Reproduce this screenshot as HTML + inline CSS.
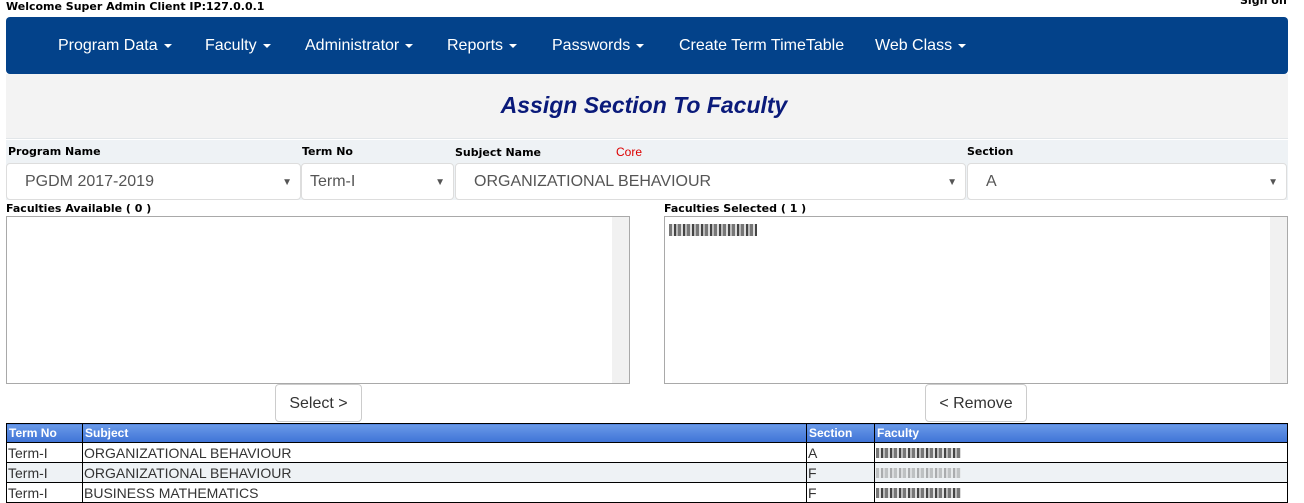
<!DOCTYPE html>
<html><head><meta charset="utf-8"><style>
*{box-sizing:border-box;margin:0;padding:0}
body{width:1304px;height:499px;overflow:hidden;background:#fff;font-family:"Liberation Sans",sans-serif;position:relative}
.a{position:absolute}
.lbl{font-family:"DejaVu Sans",sans-serif;font-weight:bold;font-size:11px;color:#000}
.nav{left:6px;top:17px;width:1282px;height:57px;background:#03428a;border-radius:4px}
.nav span{position:absolute;top:20px;color:#fff;font-size:16px;font-family:"Liberation Sans",sans-serif}
.car{display:inline-block;border-left:4px solid transparent;border-right:4px solid transparent;border-top:4px solid #fff;vertical-align:middle;margin-left:6px}
.sel{top:163px;height:37px;background:#fff;border:1px solid #ddd;border-radius:4px;font-size:16px;color:#555;padding:9px 0 0 18px}
.sel i{position:absolute;right:8px;top:13px;font-style:normal;font-size:10px;color:#555}
.lb{top:216px;height:168px;border:1px solid #a9a9a9;background:#fff}
.sb{position:absolute;right:0;top:0;width:17px;height:100%;background:#f1f1f1}
.btn{top:384px;height:38px;border:1px solid #ccc;border-radius:4px;background:#fff;font-size:16px;color:#333;text-align:center;padding-top:10px}
table{position:absolute;left:6px;top:423px;width:1282px;border-collapse:collapse;font-size:14px}
th{background:linear-gradient(#6a9ae8,#3f73d6);color:#fff;text-align:left;font-size:12px;font-family:"Liberation Sans",sans-serif;height:19px;border:1px solid #000;padding:0 2px}
td{height:20px;border:1px solid #000;padding:0 1px;color:#333}
tr.alt td{background:#eef2f5}
.blur{display:inline-block;width:85px;height:10px;background:repeating-linear-gradient(90deg,#777 0 3px,#ddd 3px 5px,#444 5px 7px,#bbb 7px 9px)}
</style></head><body>
<div class="a lbl" style="left:6px;top:0;">Welcome Super Admin Client IP:127.0.0.1</div>
<div class="a lbl" style="left:1240px;top:-6px;">Sign off</div>
<div class="a nav">
<span style="left:52px">Program Data<b class="car"></b></span>
<span style="left:199px">Faculty<b class="car"></b></span>
<span style="left:299px">Administrator<b class="car"></b></span>
<span style="left:441px">Reports<b class="car"></b></span>
<span style="left:546px">Passwords<b class="car"></b></span>
<span style="left:673px">Create Term TimeTable</span>
<span style="left:869px">Web Class<b class="car"></b></span>
</div>
<div class="a" style="left:6px;top:74px;width:1282px;height:65px;background:#f3f3f3;border-bottom:1px solid #e2e6e9"></div>
<div class="a" style="left:0;top:92px;width:1288px;text-align:center;font-size:23px;font-weight:bold;font-style:italic;color:#0a1a7a">Assign Section To Faculty</div>
<div class="a" style="left:6px;top:140px;width:1282px;height:60px;background:#eef2f5"></div>
<div class="a lbl" style="left:8px;top:145px">Program Name</div>
<div class="a lbl" style="left:302px;top:145px">Term No</div>
<div class="a lbl" style="left:455px;top:146px">Subject Name</div>
<div class="a" style="left:616px;top:145px;font-size:12px;color:#d00">Core</div>
<div class="a lbl" style="left:967px;top:145px">Section</div>
<div class="a sel" style="left:6px;width:295px">PGDM 2017-2019<i>▼</i></div>
<div class="a sel" style="left:301px;width:153px;padding-left:8px">Term-I<i>▼</i></div>
<div class="a sel" style="left:455px;width:511px">ORGANIZATIONAL BEHAVIOUR<i>▼</i></div>
<div class="a sel" style="left:967px;width:320px">A<i>▼</i></div>
<div class="a lbl" style="left:6px;top:202px">Faculties Available ( 0 )</div>
<div class="a lbl" style="left:664px;top:202px">Faculties Selected ( 1 )</div>
<div class="a lb" style="left:6px;width:624px"><div class="sb"></div></div>
<div class="a lb" style="left:664px;width:624px"><div class="sb"></div><span class="blur" style="position:absolute;left:4px;top:7px;width:88px;height:12px"></span></div>
<div class="a btn" style="left:275px;width:87px">Select &gt;</div>
<div class="a btn" style="left:925px;width:102px">&lt; Remove</div>
<table>
<tr><th style="width:76px">Term No</th><th style="width:724px">Subject</th><th style="width:68px">Section</th><th>Faculty</th></tr>
<tr><td>Term-I</td><td>ORGANIZATIONAL BEHAVIOUR</td><td>A</td><td><span class="blur"></span></td></tr>
<tr class="alt"><td>Term-I</td><td>ORGANIZATIONAL BEHAVIOUR</td><td>F</td><td><span class="blur" style="opacity:.4"></span></td></tr>
<tr><td>Term-I</td><td>BUSINESS MATHEMATICS</td><td>F</td><td><span class="blur"></span></td></tr>
</table>
</body></html>
